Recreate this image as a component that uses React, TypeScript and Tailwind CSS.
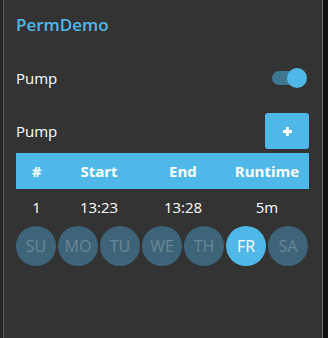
import React, { useState } from 'react';

const days = ['SU', 'MO', 'TU', 'WE', 'TH', 'FR', 'SA'];

export default function App() {
  const [enabled, setEnabled] = useState(true);
  const [active] = useState<string[]>(['FR']);

  return (
    <div
      className="flex h-[338px] w-[328px] bg-[#111111]"
      style={{ fontFamily: '"Open Sans", "Noto Sans", sans-serif' }}
    >
      <div className="w-[3px] bg-[#262626]" />
      <div className="w-px bg-[#5a5a5a]" />
      <div className="flex w-[318px] flex-col bg-[#333333] pl-3 pr-[13px]">
        <h1 className="mt-[14px] text-[17px] font-semibold leading-[22px] text-[#4fb8e8]">PermDemo</h1>

        {/* Toggle row */}
        <div className="mt-[30px] flex h-6 items-center justify-between">
          <span className="text-[15px] text-white">Pump</span>
          <button
            className="relative mr-[3px] h-[14px] w-[34px] rounded-full bg-[#3f7791]"
            onClick={() => setEnabled(!enabled)}
            aria-label="Toggle pump"
          >
            <span
              className={`absolute top-[-3px] h-5 w-5 rounded-full bg-[#4fb8e8] ${enabled ? 'right-[-1px]' : 'left-[-1px]'}`}
            />
          </button>
        </div>

        {/* Schedule header */}
        <div className="mt-[23px] flex h-9 items-center justify-between">
          <span className="text-[15px] text-white">Pump</span>
          <button className="flex h-9 w-11 items-center justify-center rounded-[3px] bg-[#4fb8e8]">
            <svg width="11" height="11" viewBox="0 0 11 11">
              <path d="M5.5 1v9M1 5.5h9" stroke="white" strokeWidth="3" />
            </svg>
          </button>
        </div>

        {/* Table */}
        <div className="mt-1 grid grid-cols-[41px_84px_84px_84px] text-center">
          <div className="contents text-[15px] font-bold text-white">
            <div className="flex h-9 items-center justify-center bg-[#4fb8e8]">#</div>
            <div className="flex h-9 items-center justify-center bg-[#4fb8e8]">Start</div>
            <div className="flex h-9 items-center justify-center bg-[#4fb8e8]">End</div>
            <div className="flex h-9 items-center justify-center bg-[#4fb8e8]">Runtime</div>
          </div>
          <div className="contents text-[15px] text-white">
            <div className="flex h-9 items-center justify-center">1</div>
            <div className="flex h-9 items-center justify-center">13:23</div>
            <div className="flex h-9 items-center justify-center">13:28</div>
            <div className="flex h-9 items-center justify-center">5m</div>
          </div>
        </div>

        {/* Days */}
        <div className="mt-px flex gap-[2px]">
          {days.map((d) => {
            const on = active.includes(d);
            return (
              <div
                key={d}
                className={`flex h-10 w-10 items-center justify-center rounded-full text-[16px] ${
                  on ? 'bg-[#4fb8e8] text-white' : 'bg-[#3d6478] text-[#6b8795]'
                }`}
              >
                {d}
              </div>
            );
          })}
        </div>
      </div>
      <div className="w-px bg-[#6e6e6e]" />
    </div>
  );
}
